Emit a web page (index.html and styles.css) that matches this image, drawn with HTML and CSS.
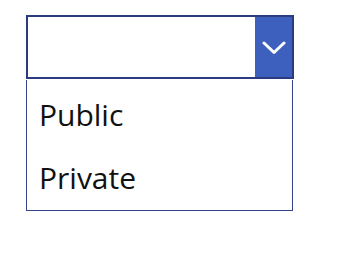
FILE: index.html
```html
<!DOCTYPE html>
<html>
<head>
<meta charset="utf-8">
<link rel="stylesheet" href="styles.css">
</head>
<body>
<div class="dropdown">
  <div class="control">
    <div class="value"></div>
    <div class="button">
      <svg width="24" height="14" viewBox="0 0 24 14"><path d="M2 2 L12 11.5 L22 2" fill="none" stroke="#ffffff" stroke-width="3" stroke-linecap="round" stroke-linejoin="round"/></svg>
    </div>
  </div>
  <ul class="list">
    <li class="item">Public</li>
    <li class="item">Private</li>
  </ul>
</div>
</body>
</html>
```
FILE: styles.css
```css
html, body {
  margin: 0;
  padding: 0;
  background: #ffffff;
}
body {
  padding: 15px 0 0 26px;
  font-family: "Open Sans", "Noto Sans", sans-serif;
}
.dropdown {
  width: 268px;
  display: flex;
  flex-direction: column;
}
.control {
  box-sizing: border-box;
  height: 64px;
  border: 2px solid #2c3a80;
  display: flex;
  background: #ffffff;
}
.value {
  flex: 1;
}
.button {
  width: 37px;
  background: #3d5fbe;
  display: flex;
  align-items: center;
  justify-content: center;
  padding-top: 2px;
  box-sizing: border-box;
}
.button svg {
  display: block;
}
.list {
  margin: 0;
  padding: 3px 0 1px 0;
  list-style: none;
  width: 267px;
  box-sizing: border-box;
  border: 1px solid #34448a;
  border-top: none;
  margin-top: 1px;
}
.item {
  height: 63px;
  line-height: 63px;
  padding-left: 12px;
  font-size: 30px;
  color: #111111;
}
```
